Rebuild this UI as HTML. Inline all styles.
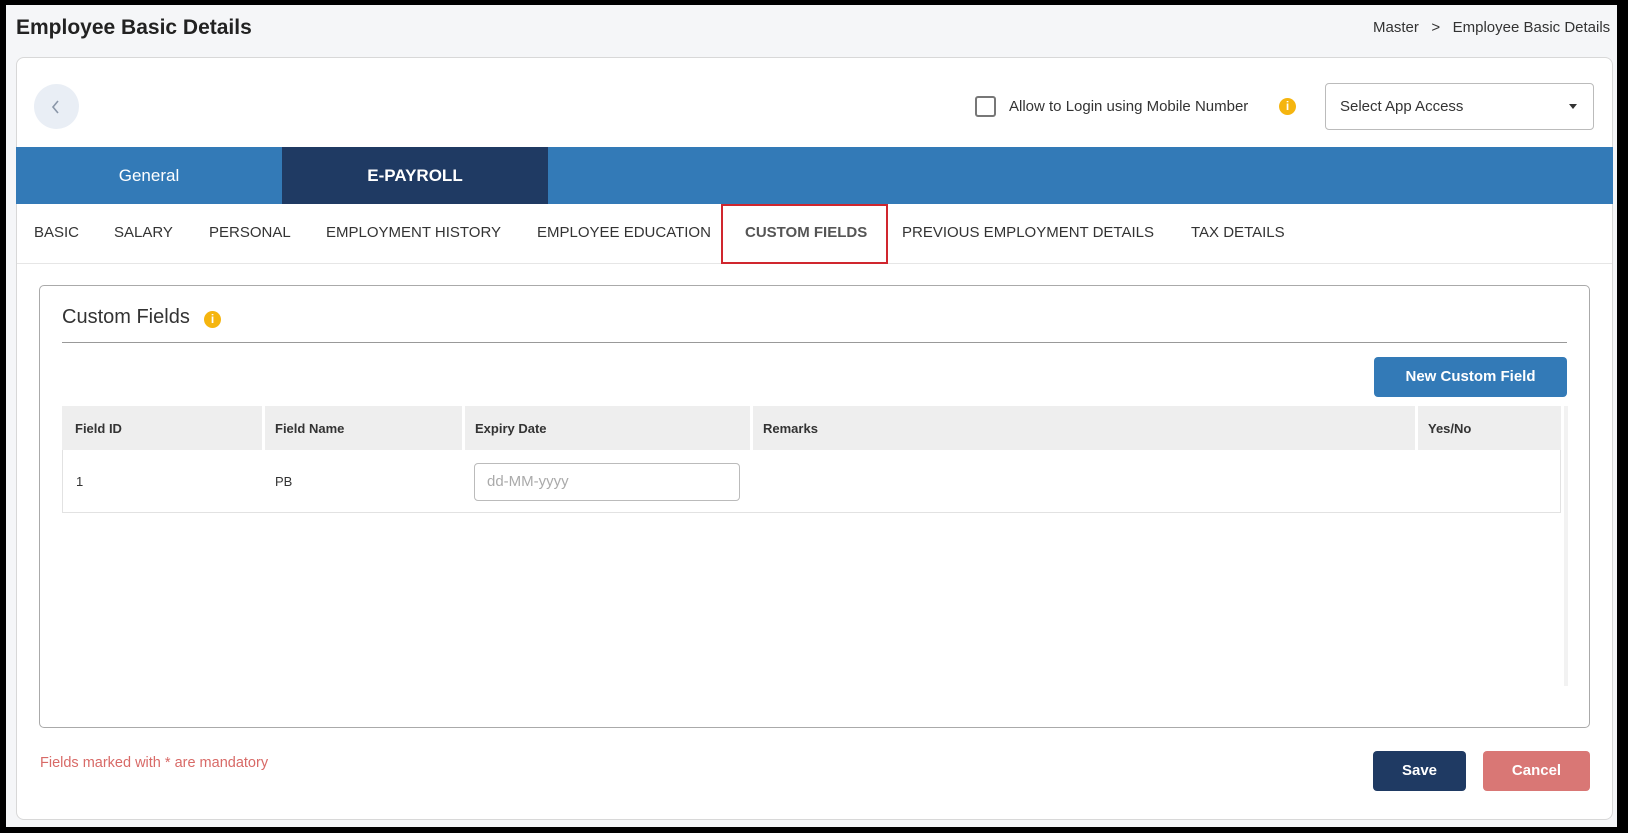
<!DOCTYPE html>
<html><head><meta charset="utf-8"><style>
*{box-sizing:border-box;margin:0;padding:0}
body{width:1628px;height:833px;background:#000;font-family:"Liberation Sans",sans-serif;position:relative;overflow:hidden;color:#333}
.page{position:absolute;left:6px;top:5px;width:1611px;height:822px;background:#f5f6f8}
.abs{position:absolute;white-space:nowrap}
.card{position:absolute;left:10px;top:52px;width:1597px;height:763px;background:#fff;border:1px solid #d8d8d8;border-radius:8px}
.info{position:absolute;width:17px;height:17px;border-radius:50%;background:#f5b50f;color:#fff;font-size:12px;font-weight:bold;text-align:center;line-height:17px}
.tabs span{position:absolute;top:20px;font-size:15px;color:#333}
</style></head><body>
<div class="page">
<div class="abs" style="left:10px;top:11px;font-size:21px;font-weight:bold;color:#222">Employee Basic Details</div>
<div class="abs" style="left:1367px;top:14px;font-size:15px;color:#333">Master &nbsp;&nbsp;&gt;&nbsp;&nbsp; Employee Basic Details</div>
<div class="card">
 <div class="abs" style="left:17px;top:26px;width:45px;height:45px;border-radius:50%;background:#e9eef5"></div>
 <svg class="abs" style="left:33px;top:40px" width="12" height="18"><path d="M8 3L3 9L8 15" stroke="#8a96a8" stroke-width="1.6" fill="none"/></svg>
 <div class="abs" style="left:958px;top:38px;width:21px;height:21px;border:2px solid #777;border-radius:3px"></div>
 <div class="abs" style="left:992px;top:40px;font-size:15px;color:#333">Allow to Login using Mobile Number</div>
 <div class="info" style="left:1262px;top:40px">i</div>
 <div class="abs" style="left:1308px;top:25px;width:269px;height:47px;border:1px solid #bbb;border-radius:4px"></div>
 <div class="abs" style="left:1323px;top:40px;font-size:15px;color:#333">Select App Access</div>
 <div class="abs" style="left:1552px;top:46px;width:0;height:0;border-left:4px solid transparent;border-right:4px solid transparent;border-top:5px solid #333"></div>
 <div class="abs" style="left:-1px;top:89px;width:1597px;height:57px;background:#337ab7"></div>
 <div class="abs" style="left:-1px;top:89px;width:266px;height:57px;color:#fff;font-size:17px;text-align:center;line-height:57px">General</div>
 <div class="abs" style="left:265px;top:89px;width:266px;height:57px;background:#1f3a63;color:#fff;font-size:17px;font-weight:bold;text-align:center;line-height:57px">E-PAYROLL</div>
 <div class="tabs abs" style="left:0;top:146px;width:1595px;height:60px;border-bottom:1px solid #e6e6e6">
  <span style="left:17px">BASIC</span><span style="left:97px">SALARY</span><span style="left:192px">PERSONAL</span><span style="left:309px">EMPLOYMENT HISTORY</span><span style="left:520px">EMPLOYEE EDUCATION</span>
  <div class="abs" style="left:704px;top:0;width:167px;height:60px;border:2px solid #d0262e"></div>
  <span style="left:728px;font-weight:bold;color:#555">CUSTOM FIELDS</span><span style="left:885px">PREVIOUS EMPLOYMENT DETAILS</span><span style="left:1174px">TAX DETAILS</span>
 </div>
 <div class="abs" style="left:22px;top:227px;width:1551px;height:443px;border:1px solid #aaa;border-radius:5px">
  <div class="abs" style="left:22px;top:20px;font-size:20px;color:#333">Custom Fields</div>
  <div class="info" style="left:164px;top:25px">i</div>
  <div class="abs" style="left:22px;top:56px;width:1505px;height:1px;background:#999"></div>
  <div class="abs" style="left:1334px;top:71px;width:193px;height:40px;background:#337ab7;border-radius:4px;color:#fff;font-size:15px;font-weight:bold;text-align:center;line-height:40px">New Custom Field</div>
  <div class="abs" style="left:22px;top:120px;width:1499px;height:107px;border:1px solid #e2e2e2"></div>
  <div class="abs" style="left:22px;top:120px;width:1499px;height:44px;background:#eee"></div>
  <div class="abs" style="left:222px;top:120px;width:3px;height:44px;background:#fff"></div>
  <div class="abs" style="left:422px;top:120px;width:3px;height:44px;background:#fff"></div>
  <div class="abs" style="left:710px;top:120px;width:3px;height:44px;background:#fff"></div>
  <div class="abs" style="left:1375px;top:120px;width:3px;height:44px;background:#fff"></div>
  <div class="abs" style="left:35px;top:135px;font-size:13px;font-weight:bold">Field ID</div>
  <div class="abs" style="left:235px;top:135px;font-size:13px;font-weight:bold">Field Name</div>
  <div class="abs" style="left:435px;top:135px;font-size:13px;font-weight:bold">Expiry Date</div>
  <div class="abs" style="left:723px;top:135px;font-size:13px;font-weight:bold">Remarks</div>
  <div class="abs" style="left:1388px;top:135px;font-size:13px;font-weight:bold">Yes/No</div>
  <div class="abs" style="left:36px;top:188px;font-size:13px">1</div>
  <div class="abs" style="left:235px;top:188px;font-size:13px">PB</div>
  <div class="abs" style="left:434px;top:177px;width:266px;height:38px;border:1px solid #bbb;border-radius:4px;padding-left:12px;line-height:36px;font-size:15px;color:#aaa">dd-MM-yyyy</div>
  <div class="abs" style="left:1524px;top:120px;width:4px;height:280px;background:#f2f2f2"></div>
 </div>
 <div class="abs" style="left:23px;top:697px;font-size:14.5px;color:#d86a67">Fields marked with * are mandatory</div>
 <div class="abs" style="left:1356px;top:693px;width:93px;height:40px;background:#1f3a63;border-radius:4px;color:#fff;font-size:15px;font-weight:bold;text-align:center;line-height:40px">Save</div>
 <div class="abs" style="left:1466px;top:693px;width:107px;height:40px;background:#d97775;border-radius:4px;color:#fff;font-size:15px;font-weight:bold;text-align:center;line-height:40px">Cancel</div>
</div>
</div>
</body></html>
